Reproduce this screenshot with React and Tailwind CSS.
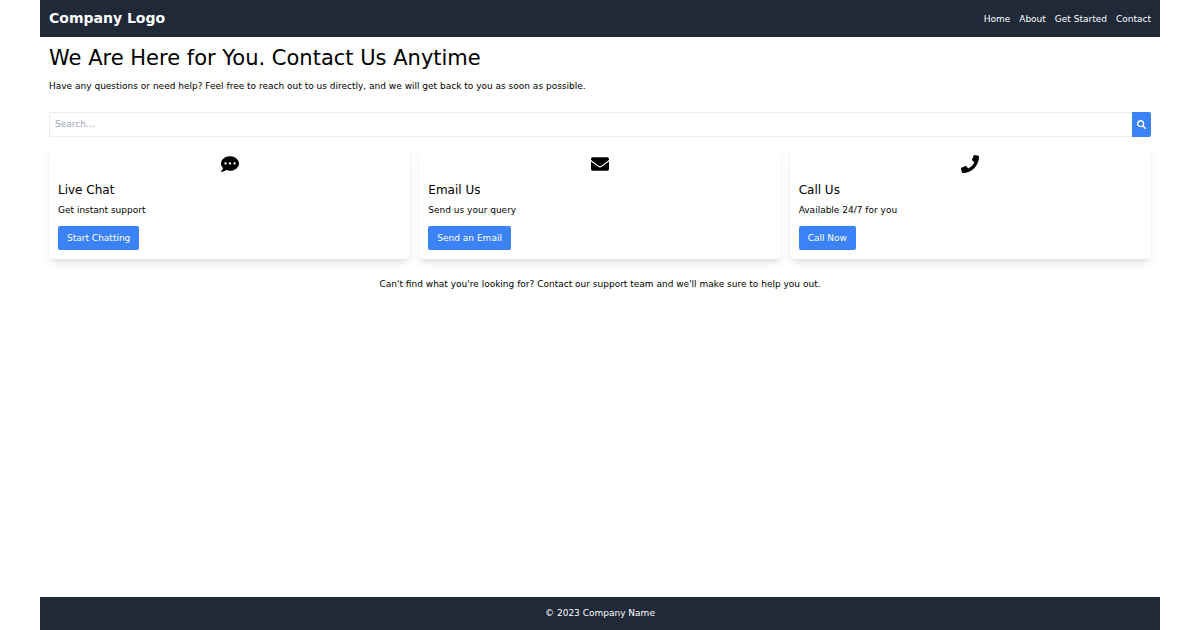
import { FaCommentDots, FaEnvelope, FaPhone, FaSearch } from "react-icons/fa";

const navLinks = ["Home", "About", "Get Started", "Contact"];

const contactOptions = [
  {
    title: "Live Chat",
    text: "Get instant support",
    action: "Start Chatting",
    icon: FaCommentDots,
  },
  {
    title: "Email Us",
    text: "Send us your query",
    action: "Send an Email",
    icon: FaEnvelope,
  },
  {
    title: "Call Us",
    text: "Available 24/7 for you",
    action: "Call Now",
    icon: FaPhone,
  },
];

function ContactCard({ title, text, action, icon: Icon }) {
  return (
    <div className="flex-1 flex flex-col items-start p-[9px] rounded-[5px] shadow-[0_6px_9px_-2px_rgba(0,0,0,0.1),0_2px_4px_-1px_rgba(0,0,0,0.05)]">
      <Icon size={18} className="self-center mb-[9px]" />
      <h2 className="text-[12px] leading-[17px] mb-[4px]">{title}</h2>
      <p className="mb-[9px]">{text}</p>
      <button className="px-[9px] py-[5px] bg-[#3b82f6] text-white rounded-[2px]">
        {action}
      </button>
    </div>
  );
}

export default function App() {
  return (
    <div className="mx-10 min-h-screen flex flex-col bg-white text-black text-[9px] leading-[14px] font-['DejaVu_Sans',sans-serif]">
      <header className="flex items-center justify-between p-[9px] bg-[#1f2937] text-white">
        <div className="text-[14px] leading-[19px] font-bold">Company Logo</div>
        <nav className="flex gap-[9px]">
          {navLinks.map((link) => (
            <a key={link} href="#">
              {link}
            </a>
          ))}
        </nav>
      </header>

      <main className="flex-1 p-[9px]">
        <h1 className="text-[21px] leading-[24px] mb-[9px]">
          We Are Here for You. Contact Us Anytime
        </h1>
        <p className="mb-[19px]">
          Have any questions or need help? Feel free to reach out to us
          directly, and we will get back to you as soon as possible.
        </p>

        {/* Search */}
        <form className="flex mb-[9px]">
          <input
            type="text"
            aria-label="Search"
            placeholder="Search..."
            className="flex-1 min-w-0 px-[5px] py-[4px] leading-[15px] border border-r-0 border-[#ececee] rounded-l-[2px] placeholder:text-[#9ca3af]"
          />
          <button
            type="button"
            aria-label="Search"
            className="px-[5px] bg-[#3b82f6] text-white rounded-r-[2px]"
          >
            <FaSearch size={9} />
          </button>
        </form>

        {/* Contact options */}
        <div className="flex gap-[9px] mb-[18px]">
          {contactOptions.map((option) => (
            <ContactCard key={option.title} {...option} />
          ))}
        </div>

        <p className="text-center">
          Can't find what you're looking for? Contact our support team and
          we'll make sure to help you out.
        </p>
      </main>

      <footer className="p-[9px] leading-[15px] bg-[#1f2937] text-white text-center">
        © 2023 Company Name
      </footer>
    </div>
  );
}
